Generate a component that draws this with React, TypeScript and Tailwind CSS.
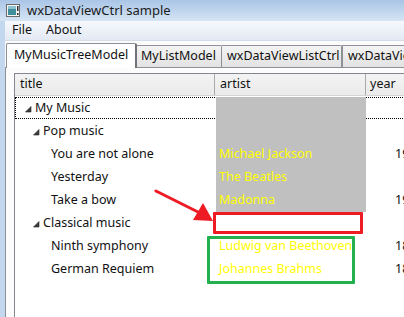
import React from "react";

type Row = {
  title: string;
  level: number;
  expander?: boolean;
  artist?: string;
  year?: string;
};

const rows: Row[] = [
  { title: "My Music", level: 0, expander: true },
  { title: "Pop music", level: 1, expander: true },
  { title: "You are not alone", level: 2, artist: "Michael Jackson", year: "1995" },
  { title: "Yesterday", level: 2, artist: "The Beatles" },
  { title: "Take a bow", level: 2, artist: "Madonna", year: "1994" },
  { title: "Classical music", level: 1, expander: true },
  { title: "Ninth symphony", level: 2, artist: "Ludwig van Beethoven", year: "1824" },
  { title: "German Requiem", level: 2, artist: "Johannes Brahms", year: "1868" },
];

function Expander() {
  return (
    <svg width="13" height="10" viewBox="0 0 13 10" className="shrink-0">
      <polygon points="5.5,8 11,2.5 11,8" fill="#3c3c3c" stroke="#262626" strokeWidth="0.6" />
    </svg>
  );
}

function AppIcon() {
  return (
    <svg width="15" height="13" viewBox="0 0 15 13" className="shrink-0">
      <rect x="0.5" y="0.5" width="13" height="12" fill="#f4f4f4" stroke="#6b6b6b" />
      <rect x="2" y="2" width="8" height="9" fill="#3f8f9a" />
      <rect x="2" y="2" width="8" height="3" fill="#8cc2cf" />
      <rect x="11" y="2" width="1.5" height="5" fill="#333" />
      <rect x="11" y="9" width="1.5" height="2" fill="#333" />
    </svg>
  );
}

export default function App() {
  return (
    <div
      className="relative w-[404px] h-[317px] overflow-hidden flex flex-col bg-[#c3d7ee] text-[12.5px] text-[#111]"
      style={{ fontFamily: '"Noto Sans", "Liberation Sans", sans-serif' }}
    >
      {/* title bar */}
      <div className="h-[21px] shrink-0 flex items-center gap-[6px] pl-[6px] bg-gradient-to-b from-[#a9c5e6] to-[#d6e5f4]">
        <AppIcon />
        <span className="text-[#1b1b1b] leading-none text-[13px]">wxDataViewCtrl sample</span>
      </div>

      <div className="flex-1 flex pl-[5px] min-h-0">
        <div className="flex-1 flex flex-col bg-[#fbfbfb] min-w-0">
          {/* menu */}
          <div className="h-[20px] shrink-0 flex items-center gap-[14px] pl-[7px] bg-gradient-to-b from-[#f6f8fc] to-[#e3e9f4] border-b border-[#d5dde9]">
            <span>File</span>
            <span>About</span>
          </div>

          {/* tabs */}
          <div className="h-[25px] shrink-0 flex items-end pl-[1px] bg-[#fbfbfb] mt-[1px]">
            <div className="relative z-10 h-[25px] w-[131px] -mb-px shrink-0 flex items-center pl-[7px] bg-white border border-b-0 border-[#8d9097] border-r-2 border-r-[#6f7278] rounded-t-[2px]">
              <span className="-mt-[1px]">MyMusicTreeModel</span>
            </div>
            <div className="h-[22px] w-[85px] shrink-0 flex items-center pl-[4px] bg-gradient-to-b from-[#f4f4f4] to-[#e2e2e2] border border-b-0 border-l-0 border-[#8d9097] rounded-tr-[2px]">
              <span>MyListModel</span>
            </div>
            <div className="h-[22px] w-[120px] shrink-0 flex items-center pl-[5px] bg-gradient-to-b from-[#f4f4f4] to-[#e2e2e2] border border-b-0 border-l-0 border-[#8d9097] rounded-tr-[2px]">
              <span>wxDataViewListCtrl</span>
            </div>
            <div className="h-[22px] w-[120px] shrink-0 flex items-center pl-[5px] bg-gradient-to-b from-[#f4f4f4] to-[#e2e2e2] border border-b-0 border-[#8d9097] whitespace-nowrap">
              <span>wxDataViewCtrl</span>
            </div>
          </div>

          {/* panel */}
          <div className="flex-1 min-h-0 border-t border-l border-[#8d9097] bg-[#fcfcfc] pl-[8px] pt-[5px]">
            <div className="h-full border-t border-l border-[#828790] bg-white">
              {/* header */}
              <div className="h-[22px] flex bg-gradient-to-b from-[#f3f3f3] to-[#ebebeb] border-b border-[#d5d5d5]">
                <div className="w-[200px] shrink-0 flex items-center pl-[5px] border-r border-[#a9a9a9]">title</div>
                <div className="w-[151px] shrink-0 flex items-center pl-[5px] border-r border-[#a9a9a9]">artist</div>
                <div className="w-[80px] shrink-0 flex items-center pl-[4px]">year</div>
              </div>

              {/* rows */}
              <div className="relative pt-[1px]">
                <div className="absolute left-0 top-[1px] w-[440px] h-[22px] border border-dotted border-black pointer-events-none" />
                {rows.map((r, i) => (
                  <div key={r.title} className="h-[23px] flex items-center">
                    <div
                      className="w-[201px] shrink-0 h-full flex items-center whitespace-nowrap"
                      style={{ paddingLeft: 5 + r.level * 8 }}
                    >
                      {r.expander ? <Expander /> : <span className="w-[13px] shrink-0" />}
                      <span className="ml-[2px]">{r.title}</span>
                    </div>
                    <div
                      className={
                        "relative z-10 w-[150px] shrink-0 h-full flex items-center pl-[3px] whitespace-nowrap text-[#ffff00] " +
                        (i < 5 ? "bg-[#c0c0c0]" : "")
                      }
                    >
                      {r.artist}
                    </div>
                    <div className="w-[80px] shrink-0 h-full flex items-center pl-[29px]">{r.year}</div>
                  </div>
                ))}
              </div>
            </div>
          </div>
        </div>
      </div>

      {/* annotations */}
      <div className="absolute left-[213px] top-[212px] w-[150px] h-[22px] border-[3px] border-[#ed1c24] rounded-[1px]" />
      <div className="absolute left-[207px] top-[236px] w-[148px] h-[48px] border-[3px] border-[#22b14c] rounded-[1px]" />
      <svg className="absolute left-0 top-0 pointer-events-none" width="404" height="317">
        <line x1="156" y1="191" x2="200" y2="213" stroke="#ed1c24" strokeWidth="3" strokeLinecap="round" />
        <polygon points="213,221 193,220 203,203" fill="#ed1c24" />
      </svg>
    </div>
  );
}
